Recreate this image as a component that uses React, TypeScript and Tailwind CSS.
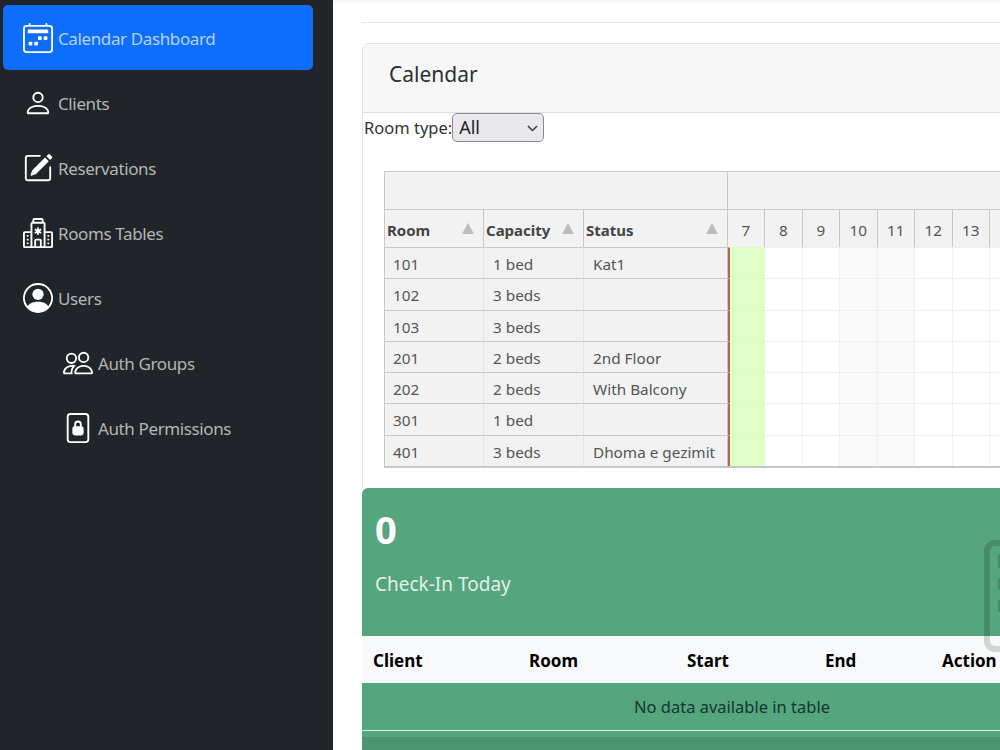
import type { ReactNode } from "react";
import {
  BsCalendar2Week,
  BsChevronDown,
  BsFileLock2,
  BsHospital,
  BsPencilSquare,
  BsPeople,
  BsPerson,
  BsPersonCircle,
} from "react-icons/bs";

const days = [7, 8, 9, 10, 11, 12, 13, 14];

const rooms = [
  { room: "101", capacity: "1 bed", status: "Kat1" },
  { room: "102", capacity: "3 beds", status: "" },
  { room: "103", capacity: "3 beds", status: "" },
  { room: "201", capacity: "2 beds", status: "2nd Floor" },
  { room: "202", capacity: "2 beds", status: "With Balcony" },
  { room: "301", capacity: "1 bed", status: "" },
  { room: "401", capacity: "3 beds", status: "Dhoma e gezimit" },
];

function NavItem({
  icon,
  label,
  active,
  sub,
}: {
  icon: ReactNode;
  label: string;
  active?: boolean;
  sub?: boolean;
}) {
  return (
    <a
      className={
        "flex h-[65px] items-center rounded-[5px] gap-[5px] text-[17px] tracking-[-0.38px] " +
        (sub ? "pl-[60px] " : "pl-[20px] ") +
        (active ? "bg-[#0d6efd] text-[#b6d3fe]" : "text-[#b4b5b6]")
      }
    >
      <span className="flex h-[30px] w-[30px] shrink-0 items-center justify-center text-[30px] text-white">
        {icon}
      </span>
      <span className="pt-[3px]">{label}</span>
    </a>
  );
}

function Sidebar() {
  return (
    <nav className="flex h-full w-[333px] shrink-0 flex-col bg-[#212529] pl-[3px] pr-[20px] pt-[5px]">
      <NavItem icon={<BsCalendar2Week />} label="Calendar Dashboard" active />
      <NavItem icon={<BsPerson />} label="Clients" />
      <NavItem icon={<BsPencilSquare />} label="Reservations" />
      <NavItem icon={<BsHospital />} label="Rooms Tables" />
      <NavItem icon={<BsPersonCircle />} label="Users" />
      <NavItem icon={<BsPeople />} label="Auth Groups" sub />
      <NavItem icon={<BsFileLock2 />} label="Auth Permissions" sub />
    </nav>
  );
}

function SortHead({ label }: { label: string }) {
  return (
    <div className="flex items-center justify-between border-r border-t border-[#c8c8c8] bg-[#f2f2f2] pl-[2px] pr-[9px] text-[15px] font-bold text-[#444]">
      <span className="pt-[3px]">{label}</span>
      <span className="h-0 w-0 border-x-[6px] border-b-[11px] border-x-transparent border-b-[#bdbdbd]" />
    </div>
  );
}

function CalendarTable() {
  return (
    <div className="ml-[21px] mt-[29px] grid w-[720px] grid-cols-[99px_100px_143.5px_repeat(8,37.5px)] grid-rows-[38px_38px_repeat(7,31.25px)] border-b-2 border-l border-[#c8c8c8] text-[15.3px] text-[#555]">
      <div className="col-span-3 border-r border-t border-[#c8c8c8] bg-[#f2f2f2]" />
      <div className="col-span-8 border-t border-[#c8c8c8] bg-[#f2f2f2]" />
      <SortHead label="Room" />
      <SortHead label="Capacity" />
      <SortHead label="Status" />
      {days.map((d) => (
        <div
          key={d}
          className="flex items-center justify-center border-r border-t border-[#c8c8c8] bg-[#f2f2f2] pt-[3px]"
        >
          {d}
        </div>
      ))}
      {rooms.map((r) => (
        <div key={r.room} className="contents">
          <div className="flex items-center border-r border-t border-r-[#e4e4e4] border-t-[#c8c8c8] bg-[#f2f2f2] pl-[8px] pt-[3px]">
            {r.room}
          </div>
          <div className="flex items-center border-r border-t border-r-[#e4e4e4] border-t-[#c8c8c8] bg-[#f2f2f2] pl-[9px] pt-[3px]">
            {r.capacity}
          </div>
          <div className="flex items-center whitespace-nowrap border-r border-t border-r-[#c8c8c8] border-t-[#c8c8c8] bg-[#f2f2f2] pl-[9px] pt-[3px]">
            {r.status}
          </div>
          {days.map((d) => (
            <div
              key={d}
              className={
                "border-r border-t border-[#efefef] " +
                (d === 7
                  ? "border-l-2 border-r-0 border-l-[#b5654a] border-t-[#dcfcc6] bg-[#dfffc9]"
                  : d === 10 || d === 11
                    ? "bg-[#f9f9f9]"
                    : "bg-white")
              }
            />
          ))}
        </div>
      ))}
    </div>
  );
}

function CheckInCard() {
  return (
    <section className="relative w-[740px] rounded-t-[6px] bg-[#55a57f]">
      <div className="h-[148px] px-[13px] pt-[15px] text-white">
        <div className="text-[38px] font-bold leading-[52px]">0</div>
        <div className="mt-[16px] text-[19px] leading-[26px] text-[#e0f0e8]">Check-In Today</div>
      </div>
      <svg
        className="absolute left-[622px] top-[52px] text-black opacity-15"
        width="110"
        height="112"
        viewBox="0 0 110 112"
        fill="none"
        stroke="currentColor"
      >
        <rect x="3" y="3" width="104" height="106" rx="8" strokeWidth="6" />
        <path d="M16 14v14M16 38v12M16 60v12" strokeWidth="4" />
      </svg>
      <div className="grid h-[47px] grid-cols-[156px_158px_138px_117px_171px] items-center bg-[#f8f9fa] pl-[11px] pt-[2px] text-[17px] font-bold text-black">
        <span>Client</span>
        <span>Room</span>
        <span>Start</span>
        <span>End</span>
        <span>Action</span>
      </div>
      <div className="flex h-[48px] items-center justify-center border-b border-[#d9efe4] pt-[2px] text-[16.5px] text-[#12372a]">
        No data available in table
      </div>
      <div className="mt-[6px] h-[40px] bg-[#4c9572] pl-[50px] pt-[7px] text-center text-[17px] text-white">
        More info
      </div>
    </section>
  );
}

export default function App() {
  return (
    <div className="flex h-[750px] w-[1000px] overflow-hidden bg-white font-['Noto_Sans','Open_Sans',sans-serif]">
      <Sidebar />
      <main className="min-w-0 flex-1 overflow-hidden pl-[29px]">
        <div className="-ml-[29px] h-[5px] bg-gradient-to-b from-[#f3f3f3] to-white" />
        <hr className="mt-[17px] w-[800px] border-t border-[#e5e5e5]" />
        <section className="mt-[20px] h-[445px] w-[800px] rounded-t-[6px] border-l border-t border-[#e2e2e2]">
          <header className="flex h-[69px] items-center border-b border-[#e0e0e0] bg-[#f7f7f7] pb-[6px] pl-[26px] text-[21px] text-[#2b2f33]">
            Calendar
          </header>
          <div className="flex items-center pl-[1px] text-[16.5px] text-[#333]">
            <label className="pt-[2px]">Room type:</label>
            <div className="relative">
              <select className="h-[29px] w-[92px] appearance-none rounded-[5px] border border-[#8a8a8a] bg-[#e9e9ed] pl-[6px] text-[18px] text-[#222]">
                <option>All</option>
              </select>
              <BsChevronDown className="pointer-events-none absolute right-[6px] top-[10px] text-[11px] text-[#222] [stroke-width:1.2]" />
            </div>
          </div>
          <CalendarTable />
        </section>
        <CheckInCard />
      </main>
    </div>
  );
}
